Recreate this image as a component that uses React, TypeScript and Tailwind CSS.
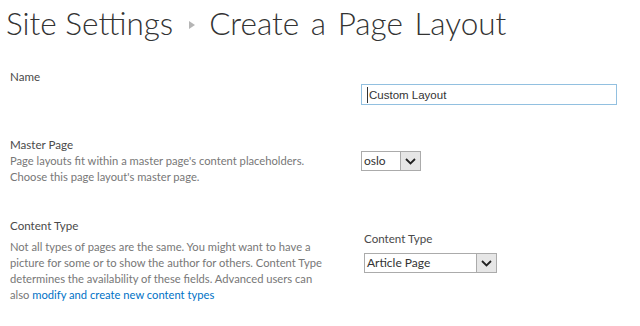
import React from "react";

function Chevron() {
  return (
    <svg width="11" height="7" viewBox="0 0 11 7" className="block">
      <path d="M1 1 L5.5 5.5 L10 1" fill="none" stroke="#222" strokeWidth="1.8" />
    </svg>
  );
}

function Select({ value, width }: { value: string; width: string }) {
  return (
    <div className={`flex h-[20px] ${width} border border-[#ababab] bg-white`}>
      <div className="flex-1 pl-[2px] text-[12px] leading-[18px] text-[#333]">{value}</div>
      <div className="flex w-[20px] items-center justify-center border-l border-[#ababab] bg-[#e6e6e6]">
        <Chevron />
      </div>
    </div>
  );
}

export default function App() {
  return (
    <div className="h-[326px] w-[640px] overflow-hidden bg-white font-['Lato'] text-[#444]">
      <div className="flex items-center pl-[6px] pt-[1px] text-[31.5px] font-light leading-[44px] text-[#333]">
        <span>Site Settings</span>
        <svg width="6" height="8" viewBox="0 0 6 8" className="ml-[16px] mr-[14px] mt-[3px]">
          <path d="M0 0 L6 4 L0 8 Z" fill="#b5b5b5" />
        </svg>
        <span className="[word-spacing:3px]">Create a Page Layout</span>
      </div>

      {/* Name */}
      <div className="mt-[24px] grid grid-cols-[361px_1fr]">
        <div className="pl-[10px] text-[11.6px] leading-[16px] text-[#4a4a4a]">Name</div>
        <div className="pt-[15px]">
          <div className="flex h-[21px] w-[256px] items-center border border-[#92c0e0] bg-white pl-[5px]">
            <div className="h-[16px] w-px bg-[#333]" />
            <span className="pl-[1px] font-['Liberation_Sans'] text-[11.5px] leading-[14px] text-[#333]">
              Custom Layout
            </span>
          </div>
        </div>
      </div>

      {/* Master Page */}
      <div className="mt-[32px] grid grid-cols-[361px_1fr]">
        <div className="pl-[10px]">
          <div className="text-[11.6px] leading-[16px] text-[#4a4a4a]">Master Page</div>
          <div className="whitespace-nowrap text-[11.2px] leading-[16px] text-[#777]">
            Page layouts fit within a master page's content placeholders.
            <br />
            Choose this page layout's master page.
          </div>
        </div>
        <div className="pt-[14px]">
          <Select value="oslo" width="w-[60px]" />
        </div>
      </div>

      {/* Content Type */}
      <div className="mt-[33px] grid grid-cols-[361px_1fr]">
        <div className="pl-[10px]">
          <div className="text-[11.6px] leading-[16px] text-[#4a4a4a]">Content Type</div>
          <div className="mt-[5px] whitespace-nowrap text-[11.2px] leading-[16px] text-[#777]">
            Not all types of pages are the same. You might want to have a
            <br />
            picture for some or to show the author for others. Content Type
            <br />
            determines the availability of these fields. Advanced users can
            <br />
            also <span className="text-[#0072c6]">modify and create new content types</span>
          </div>
        </div>
        <div className="pl-[3px] pt-[13px]">
          <div className="pl-[0px] text-[11.6px] leading-[16px] text-[#4a4a4a]">Content Type</div>
          <div className="mt-[6px]">
            <Select value="Article Page" width="w-[133px]" />
          </div>
        </div>
      </div>
    </div>
  );
}
